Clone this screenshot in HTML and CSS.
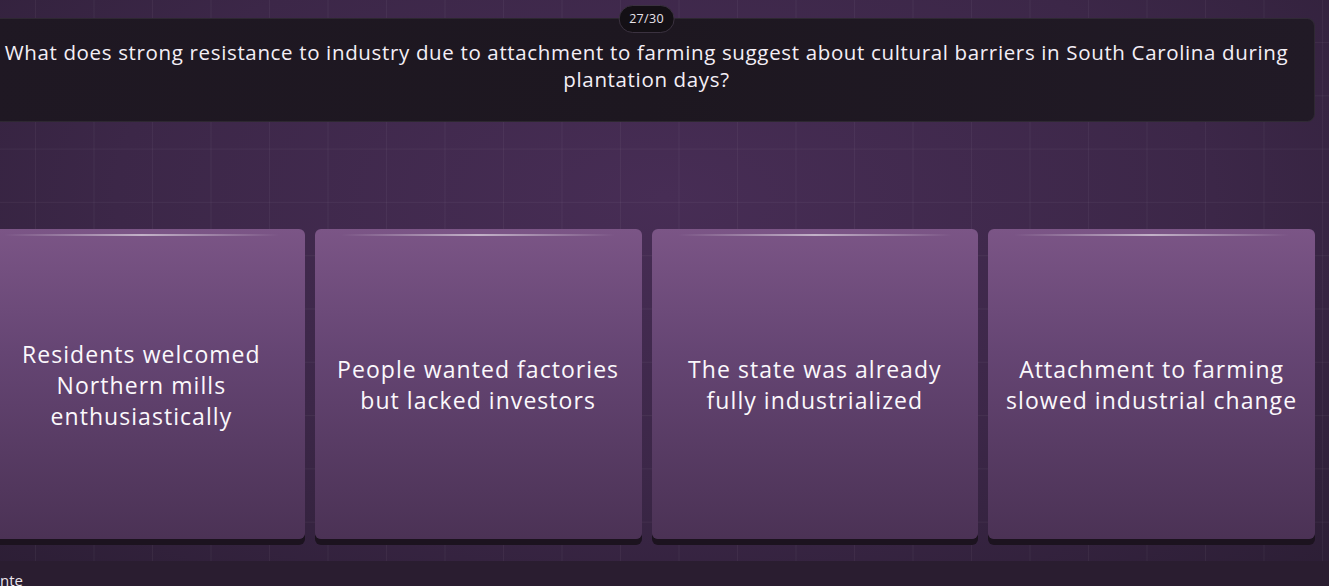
FILE: index.html
```html
<!DOCTYPE html>
<html lang="en">
<head>
  <meta charset="UTF-8">
  <meta name="viewport" content="width=device-width, initial-scale=1.0">
  <title>Quiz 27/30</title>
  <link rel="stylesheet" href="styles.css">
</head>
<body>
<div class="stage">
  <div class="quiz">
    <div class="question-box">
      <span class="counter">27/30</span>
      <p class="question">What does strong resistance to industry due to attachment to farming suggest about cultural barriers in South Carolina during plantation days?</p>
    </div>

    <!-- Answer cards -->
    <div class="answers">
      <button class="answer">Residents welcomed Northern mills enthusiastically</button>
      <button class="answer">People wanted factories but lacked investors</button>
      <button class="answer">The state was already fully industrialized</button>
      <button class="answer">Attachment to farming slowed industrial change</button>
    </div>
  </div>
</div>
<div class="footer">nte</div>
</body>
</html>
```

FILE: styles.css
```css
html, body {
  height: 100%;
}
body {
  margin: 0;
  overflow: hidden;
  background-color: #2a1d30;
  color: #f4eff6;
  font-family: 'Open Sans', 'Noto Sans', sans-serif;
}
.stage {
  height: 561px;
  overflow: hidden;
  background-color: #3a2645;
  background-image:
    linear-gradient(90deg, rgba(255, 255, 255, 0.045) 1px, transparent 1px),
    linear-gradient(rgba(255, 255, 255, 0.045) 1px, transparent 1px),
    radial-gradient(ellipse 75% 90% at 50% 35%, #472d55 0%, #3c2748 55%, #2c1e35 100%);
  background-size: 58.5px 53.3px, 58.5px 53.3px, 100% 100%;
  background-position: 35px 42px, 35px 42px, 0 0;
}
.quiz {
  width: 1337px;
  margin-left: -22px;
  padding-top: 18px;
}
.question-box {
  position: relative; /* anchor for the counter pill */
  padding: 20px 16px 28px;
  border: 1px solid rgba(255, 255, 255, 0.07);
  border-radius: 8px;
  background: linear-gradient(90deg, #1f1823, #1d1720 50%, #211a26);
}
.counter {
  position: absolute;
  top: -14px;
  left: 50%;
  transform: translateX(-50%);
  padding: 5px 10px;
  border: 1px solid #3b3240;
  border-radius: 14px;
  background-color: #141015;
  color: #e8e2ea;
  font-size: 12.5px;
  line-height: 16px;
  letter-spacing: 0.3px;
}
.question {
  margin: 0;
  font-size: 20.5px;
  line-height: 27px;
  letter-spacing: 0.65px;
  text-align: center;
}
.answers {
  display: grid;
  grid-template-columns: repeat(4, 1fr);
  gap: 10px;
  margin-top: 107px;
}
.answer {
  position: relative;
  height: 310px;
  padding: 2px 16px 0;
  border: none;
  border-radius: 6px;
  background: linear-gradient(180deg, #7b5586 0%, #654573 40%, #4b3255 100%);
  box-shadow: 0 6px 0 #1c131f;
  color: #fbf8fc;
  font-family: inherit;
  font-size: 23px;
  line-height: 31px;
  letter-spacing: 1.05px;
  cursor: pointer;
}
/* thin shine along the top edge */
.answer::before {
  content: '';
  position: absolute;
  top: 5px;
  left: 8%;
  right: 8%;
  height: 2px;
  background: linear-gradient(90deg, transparent, rgba(255, 255, 255, 0.55), transparent);
}
.footer {
  padding-top: 9px;
  font-size: 15px;
  line-height: 20px;
  color: #ece6ee;
}
```
